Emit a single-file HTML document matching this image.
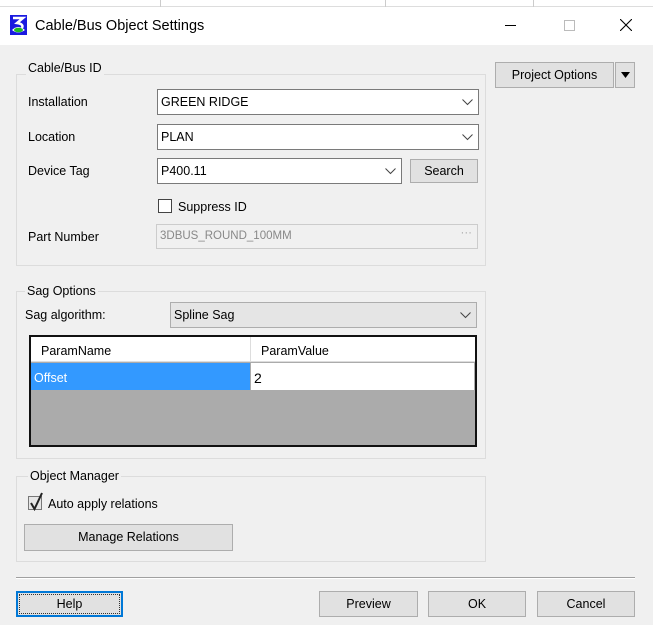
<!DOCTYPE html>
<html><head><style>
*{box-sizing:border-box;margin:0;padding:0}
body{width:653px;height:625px;position:relative;background:#f0f0f0;font-family:"Liberation Sans",sans-serif;font-size:12.5px;color:#000;overflow:hidden}
.a{position:absolute}
.top{left:0;top:0;width:653px;height:7px;background:#fff;border-bottom:1px solid #ddd}
.title{left:0;top:7px;width:653px;height:38px;background:#fff}
.grp{position:absolute;border:1px solid #dcdcdc}
.lg{position:absolute;background:#f0f0f0;padding:0 2px;line-height:14px}
.cb{position:absolute;background:#fff;border:1px solid #7a7a7a;padding-left:3px;line-height:24px;height:26px}
.cb svg{position:absolute;right:5px;top:9px}
.btn{position:absolute;background:#e1e1e1;border:1px solid #adadad;text-align:center}
.lbl{position:absolute;line-height:14px}
.chk{position:absolute;width:14px;height:14px;border:1px solid #333;background:#fff}
</style></head><body>
<div class="a top"></div>
<div class="a" style="left:160px;top:0;width:1px;height:7px;background:#ccc"></div>
<div class="a" style="left:385px;top:0;width:1px;height:7px;background:#ccc"></div>
<div class="a" style="left:533px;top:0;width:1px;height:7px;background:#ccc"></div>
<div class="a title"></div>
<svg class="a" style="left:10px;top:15px" width="17" height="20" viewBox="0 0 17 20"><rect width="17" height="20" fill="#1a1ae0"/><path d="M3 3 H13 L7 8 Q14 9 12 13" stroke="#fff" stroke-width="2.5" fill="none"/><path d="M2 15 Q8 9 15 15 Q8 20 2 15Z" fill="#fff"/><ellipse cx="8.5" cy="15" rx="4.5" ry="2.3" fill="#22bb22"/></svg>
<div class="lbl" style="left:35px;top:18px;font-size:14.5px;line-height:16px">Cable/Bus Object Settings</div>
<div class="a" style="left:505px;top:25px;width:11px;height:1px;background:#000"></div>
<div class="a" style="left:564px;top:20px;width:11px;height:11px;border:1px solid #bbb"></div>
<svg class="a" style="left:620px;top:19px" width="12" height="12"><path d="M0 0L12 12M12 0L0 12" stroke="#000" stroke-width="1.1"/></svg>

<div class="grp" style="left:16px;top:74px;width:470px;height:192px"></div>
<div class="lg" style="left:26px;top:61px">Cable/Bus ID</div>
<div class="btn" style="left:495px;top:62px;width:119px;height:26px;line-height:24px">Project Options</div>
<div class="btn" style="left:615px;top:62px;width:20px;height:26px"><svg style="position:absolute;left:5px;top:9px" width="9" height="6"><path d="M0 0H9L4.5 6Z"/></svg></div>

<div class="lbl" style="left:28px;top:95px">Installation</div>
<div class="cb" style="left:157px;top:89px;width:322px">GREEN RIDGE<svg width="11" height="7"><path d="M0.5 0.5L5.5 5.5L10.5 0.5" stroke="#444" fill="none"/></svg></div>
<div class="lbl" style="left:28px;top:130px">Location</div>
<div class="cb" style="left:157px;top:124px;width:322px">PLAN<svg width="11" height="7"><path d="M0.5 0.5L5.5 5.5L10.5 0.5" stroke="#444" fill="none"/></svg></div>
<div class="lbl" style="left:28px;top:164px">Device Tag</div>
<div class="cb" style="left:157px;top:158px;width:245px">P400.11<svg width="11" height="7"><path d="M0.5 0.5L5.5 5.5L10.5 0.5" stroke="#444" fill="none"/></svg></div>
<div class="btn" style="left:410px;top:159px;width:68px;height:24px;line-height:22px">Search</div>
<div class="chk" style="left:158px;top:199px;border-color:#444"></div>
<div class="lbl" style="left:178px;top:200px">Suppress ID</div>
<div class="lbl" style="left:28px;top:230px">Part Number</div>
<div class="cb" style="left:156px;top:224px;width:322px;height:25px;line-height:23px;background:#f0f0f0;border-color:#ccc;color:#888;font-size:11.5px">3DBUS_ROUND_100MM<span style="position:absolute;right:5px;top:-3px;color:#aaa">···</span></div>

<div class="grp" style="left:16px;top:291px;width:470px;height:168px"></div>
<div class="lg" style="left:25px;top:284px">Sag Options</div>
<div class="lbl" style="left:25px;top:308px">Sag algorithm:</div>
<div class="cb" style="left:170px;top:302px;width:307px;height:26px;background:#e5e5e5;border-color:#adadad">Spline Sag<svg width="11" height="7"><path d="M0.5 0.5L5.5 5.5L10.5 0.5" stroke="#444" fill="none"/></svg></div>
<div class="a" style="left:29px;top:335px;width:448px;height:112px;border:2px solid #111;background:#ababab">
  <div class="a" style="left:0;top:0;width:444px;height:25px;background:#fff;border-bottom:1px solid #ddd"></div>
  <div class="a" style="left:219px;top:0;width:1px;height:25px;background:#ddd"></div>
  <div class="lbl" style="left:10px;top:7px">ParamName</div>
  <div class="lbl" style="left:230px;top:7px">ParamValue</div>
  <div class="a" style="left:0;top:26px;width:219px;height:27px;background:#3399ff"></div>
  <div class="a" style="left:220px;top:26px;width:223px;height:27px;background:#fff"></div>
  <div class="lbl" style="left:3px;top:34px;color:#fff">Offset</div>
  <div class="lbl" style="left:223px;top:34px;font-size:14px">2</div>
</div>

<div class="grp" style="left:16px;top:476px;width:470px;height:86px"></div>
<div class="lg" style="left:28px;top:469px">Object Manager</div>
<div class="chk" style="left:28px;top:496px;background:#e6e6e6;border-color:#777"></div>
<svg class="a" style="left:28px;top:492px" width="16" height="19"><path d="M3 11L6.5 17L14 1" stroke="#222" stroke-width="2" fill="none"/></svg>
<div class="lbl" style="left:48px;top:497px">Auto apply relations</div>
<div class="btn" style="left:24px;top:524px;width:209px;height:27px;line-height:25px">Manage Relations</div>

<div class="a" style="left:16px;top:577px;width:619px;height:2px;background:#a0a0a0;border-bottom:1px solid #fff"></div>
<div class="btn" style="left:16px;top:591px;width:107px;height:26px;border:2px solid #0078d7;line-height:22px"><div style="position:absolute;left:1px;top:1px;right:1px;bottom:1px;border:1px dotted #333"></div>Help</div>
<div class="btn" style="left:319px;top:591px;width:99px;height:26px;line-height:24px">Preview</div>
<div class="btn" style="left:428px;top:591px;width:98px;height:26px;line-height:24px">OK</div>
<div class="btn" style="left:537px;top:591px;width:98px;height:26px;line-height:24px">Cancel</div>
</body></html>
